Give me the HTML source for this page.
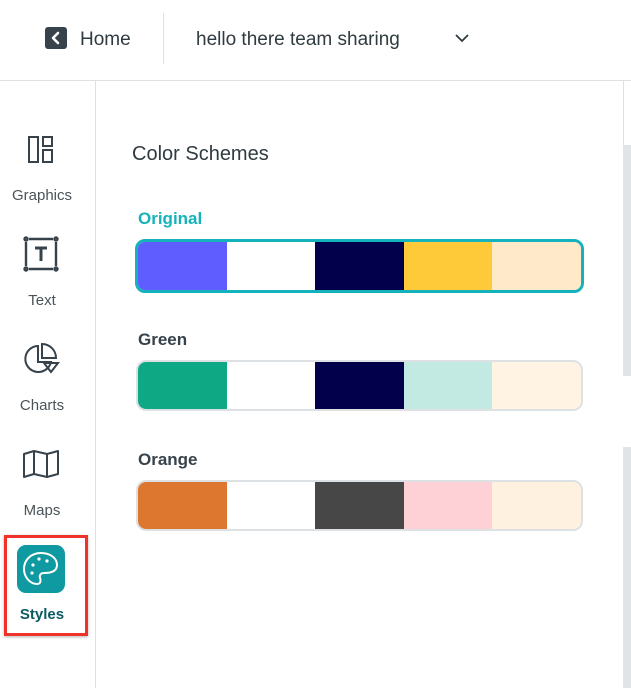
<!DOCTYPE html>
<html><head><style>
*{margin:0;padding:0;box-sizing:border-box}
body{width:631px;height:688px;overflow:hidden;background:#fff;font-family:"Liberation Sans",sans-serif;color:#2f3b40;position:relative}
.a{position:absolute}
.lbl{font-size:15px;color:#4a5358;text-align:center;width:84px;left:0}
.bar{position:absolute;display:flex;overflow:hidden;border-radius:10px}
.bar div{flex:1}
.name{position:absolute;left:138px;font-size:17px;font-weight:bold;color:#37424a}
</style></head><body>
<div class="a" style="left:0;top:80px;width:631px;height:1px;background:#dde1e4"></div>
<div class="a" style="left:163px;top:13px;width:1px;height:51px;background:#dde1e4"></div>
<div class="a" style="left:45px;top:27px;width:22px;height:22px;background:#37424a;border-radius:3px"></div>
<svg class="a" style="left:45px;top:27px" width="22" height="22"><path d="M13 6 L8 11 L13 16" stroke="#fff" stroke-width="2.6" fill="none" stroke-linecap="round" stroke-linejoin="round"/></svg>
<div class="a" style="left:80px;top:29px;font-size:19px;color:#2f3b40">Home</div>
<div class="a" style="left:196px;top:29px;font-size:19px;color:#2f3b40">hello there team sharing</div>
<svg class="a" style="left:454px;top:32px" width="16" height="12"><path d="M2 3 L8 9 L14 3" stroke="#2f3b40" stroke-width="1.8" fill="none"/></svg>

<div class="a" style="left:95px;top:81px;width:1px;height:607px;background:#dde1e4"></div>
<div class="a" style="left:623px;top:81px;width:1px;height:64px;background:#dde1e4"></div>
<div class="a" style="left:623px;top:145px;width:8px;height:231px;background:#e1e4e6"></div>
<div class="a" style="left:623px;top:447px;width:8px;height:241px;background:#e1e4e6"></div>

<svg class="a" style="left:28px;top:136px" width="28" height="28" fill="none" stroke="#37424a" stroke-width="2"><rect x="1" y="1" width="9" height="25"/><rect x="15" y="1" width="9" height="9"/><rect x="15" y="14" width="9" height="12"/></svg>
<div class="a lbl" style="top:187px">Graphics</div>
<svg class="a" style="left:23px;top:236px" width="36" height="36" fill="none" stroke="#37424a" stroke-width="2.4"><path d="M3 6V30M33 6V30M6 3H30M6 33H30"/><circle cx="3" cy="3" r="1.5"/><circle cx="33" cy="3" r="1.5"/><circle cx="3" cy="33" r="1.5"/><circle cx="33" cy="33" r="1.5"/><path d="M12 12H24M18 12V25" stroke-width="3"/></svg>
<div class="a lbl" style="top:292px">Text</div>
<svg class="a" style="left:24px;top:342px" width="36" height="34" fill="none" stroke="#37424a" stroke-width="2"><path d="M14 4A13 13 0 1 0 27 20H14Z"/><path d="M18 2V16H32A14 14 0 0 0 18 2Z"/><path d="M20 21H34L27 30Z"/></svg>
<div class="a lbl" style="top:397px">Charts</div>
<svg class="a" style="left:22px;top:449px" width="38" height="30" fill="none" stroke="#37424a" stroke-width="2" stroke-linejoin="round"><path d="M2 5L12 2L25 5L36 2V25L25 28L12 25L2 28Z M12 2V25 M25 5V28"/></svg>
<div class="a lbl" style="top:502px">Maps</div>

<div class="a" style="left:4px;top:535px;width:84px;height:101px;border:3px solid #f0332a;box-shadow:0 1px 3px rgba(0,0,0,.3)"></div>
<div class="a" style="left:17px;top:545px;width:48px;height:48px;background:#0e9aa0;border-radius:9px"></div>
<svg class="a" style="left:17px;top:545px" width="48" height="48" fill="none" stroke="#fff" stroke-width="2"><path d="M24 8C14 8 7 15 7 24C7 32 13 39 20 39C24 39 24 35 23 33C22 30 24 28 27 28C33 28 40 27 40 20C40 13 33 8 24 8Z"/><g fill="#fff" stroke="none"><circle cx="16" cy="20" r="1.6"/><circle cx="22" cy="14" r="1.6"/><circle cx="30" cy="16" r="1.6"/><circle cx="15" cy="28" r="1.6"/></g></svg>
<div class="a" style="left:0;width:84px;text-align:center;top:606px;font-size:15px;font-weight:bold;color:#0b5c62">Styles</div>

<div class="a" style="left:132px;top:143px;font-size:20px;color:#2f3b40">Color Schemes</div>

<div class="name" style="top:209px;color:#14b3bb">Original</div>
<div class="bar" style="left:135px;top:239px;width:449px;height:54px;border:3px solid #14b3bb">
<div style="background:#5f5dff"></div><div style="background:#fff"></div><div style="background:#02004a"></div><div style="background:#ffca3a"></div><div style="background:#ffe9c8"></div></div>

<div class="name" style="top:330px">Green</div>
<div class="bar" style="left:136px;top:360px;width:447px;height:51px;border:2px solid #dde1e4">
<div style="background:#0fa884"></div><div style="background:#fff"></div><div style="background:#02004a"></div><div style="background:#c2e9e2"></div><div style="background:#fff3e3"></div></div>

<div class="name" style="top:450px">Orange</div>
<div class="bar" style="left:136px;top:480px;width:447px;height:51px;border:2px solid #dde1e4">
<div style="background:#dd7730"></div><div style="background:#fff"></div><div style="background:#474747"></div><div style="background:#fdd1d5"></div><div style="background:#fff1df"></div></div>
</body></html>
